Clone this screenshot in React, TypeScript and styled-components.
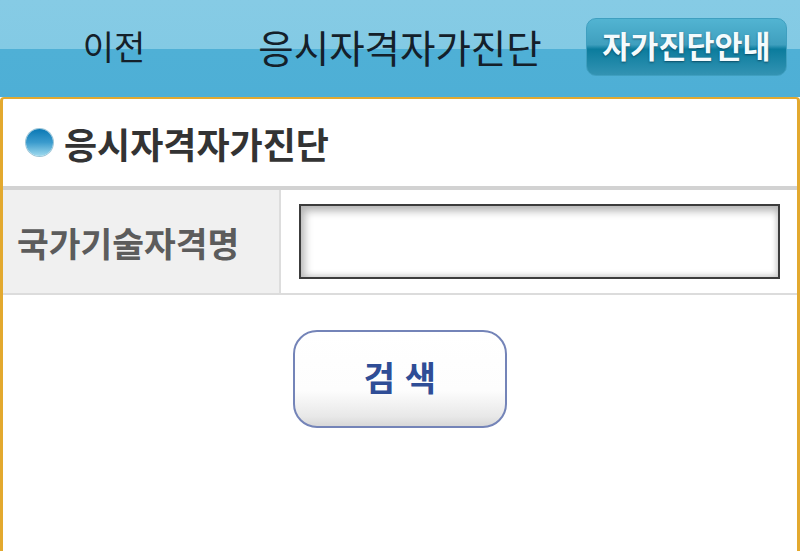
import styled, { createGlobalStyle } from 'styled-components';

const GlobalStyle = createGlobalStyle`
  html, body {
    margin: 0;
    padding: 0;
    height: 100%;
    background: #ffffff;
    overflow: hidden;
  }
  * {
    box-sizing: border-box;
  }
  body {
    font-family: "Noto Sans CJK KR", "Liberation Sans", sans-serif;
  }
`;

const App = () => {
  return (
    <Page>
      <GlobalStyle />
      <Header>
        <BackLink>이전</BackLink>
        <HeaderTitle>응시자격자가진단</HeaderTitle>
        <GuideButton>자가진단안내</GuideButton>
      </Header>

      <Panel>
        <SectionHead>
          <Bullet />
          <SectionTitle>응시자격자가진단</SectionTitle>
        </SectionHead>

        <FormRow>
          <FieldLabel>국가기술자격명</FieldLabel>
          <FieldCell>
            <SearchInput type="text" />
          </FieldCell>
        </FormRow>

        <Actions>
          <SearchButton>검 색</SearchButton>
        </Actions>
      </Panel>
    </Page>
  );
};

export default App;

const Page = styled.div`
  width: 800px;
  height: 551px;
  display: flex;
  flex-direction: column;
  overflow: hidden;
`;

const Header = styled.header`
  height: 97px;
  flex: none;
  display: flex;
  align-items: center;
  padding: 0 13px 5px 0;
  background: linear-gradient(to bottom, #86cbe5 0, #83cae4 49px, #4fb0d6 49px, #4eafd6 100%);
`;

const BackLink = styled.a`
  width: 228px;
  text-align: center;
  font-size: 34px;
  line-height: 46px;
  color: #14202a;
`;

const HeaderTitle = styled.h1`
  flex: 1;
  margin: 0 14px 0 0;
  text-align: center;
  font-size: 38.5px;
  line-height: 46px;
  font-weight: 400;
  color: #14202a;
  white-space: nowrap;
`;

const GuideButton = styled.button`
  width: 201px;
  height: 58px;
  margin-top: 1px;
  padding: 0 0 3px;
  border: 1px solid #3f9fc0;
  border-radius: 10px;
  background: linear-gradient(to bottom, #52b4d2 0, #3f9fbe 46%, #0b7c9d 54%, #3393b3 100%);
  color: #f4fbfd;
  font-family: inherit;
  font-size: 30.5px;
  font-weight: 700;
  white-space: nowrap;
  text-shadow: 0 1px 2px rgba(0, 40, 60, 0.6);
`;

const Panel = styled.main`
  flex: 1;
  display: flex;
  flex-direction: column;
  background: #ffffff;
  border: solid #e3a92f;
  border-width: 2px 3px 0;
  border-radius: 4px 4px 0 0;
`;

const SectionHead = styled.div`
  height: 91px;
  flex: none;
  display: flex;
  align-items: center;
  gap: 11px;
  padding: 0 0 0 23px;
  border-bottom: 4px solid #d2d2d2;
`;

const Bullet = styled.span`
  width: 27px;
  height: 27px;
  border-radius: 50%;
  background: linear-gradient(to bottom, #0a78b4 0, #3b9bcd 50%, #9fdaee 100%);
  box-shadow: 0 0 0 1px #9cc6d8;
`;

const SectionTitle = styled.h2`
  margin: 0;
  font-size: 36px;
  line-height: 46px;
  font-weight: 700;
  color: #333333;
  white-space: nowrap;
`;

const FormRow = styled.div`
  height: 105px;
  flex: none;
  display: flex;
  border-bottom: 2px solid #dcdcdc;
`;

const FieldLabel = styled.div`
  width: 278px;
  flex: none;
  display: flex;
  align-items: center;
  padding-left: 14px;
  background: #f0f0f0;
  border-right: 2px solid #dddddd;
  font-size: 34.5px;
  font-weight: 700;
  color: #5c5c5c;
  white-space: nowrap;
`;

const FieldCell = styled.div`
  flex: 1;
  padding: 14px 17px 14px 18px;
`;

const SearchInput = styled.input`
  display: block;
  width: 100%;
  height: 75px;
  border: 2px solid #3c3c3c;
  background: #ffffff;
  outline: none;
  box-shadow: inset 0 7px 8px -2px #b5b5b5, inset 7px 0 8px -3px #c0c0c0, inset -4px 0 6px -3px #dddddd, inset 0 -4px 6px -3px #cccccc;
`;

const Actions = styled.div`
  display: flex;
  justify-content: center;
  padding-top: 35px;
`;

const SearchButton = styled.button`
  width: 214px;
  height: 98px;
  padding: 0 0 5px;
  border: 2px solid #7484b8;
  border-radius: 24px;
  background: linear-gradient(to bottom, #ffffff 0, #fdfdfd 62%, #e8e8e8 90%, #d8d8d8 100%);
  color: #2f4d96;
  font-family: inherit;
  font-size: 34px;
  font-weight: 700;
  word-spacing: 2px;
`;
